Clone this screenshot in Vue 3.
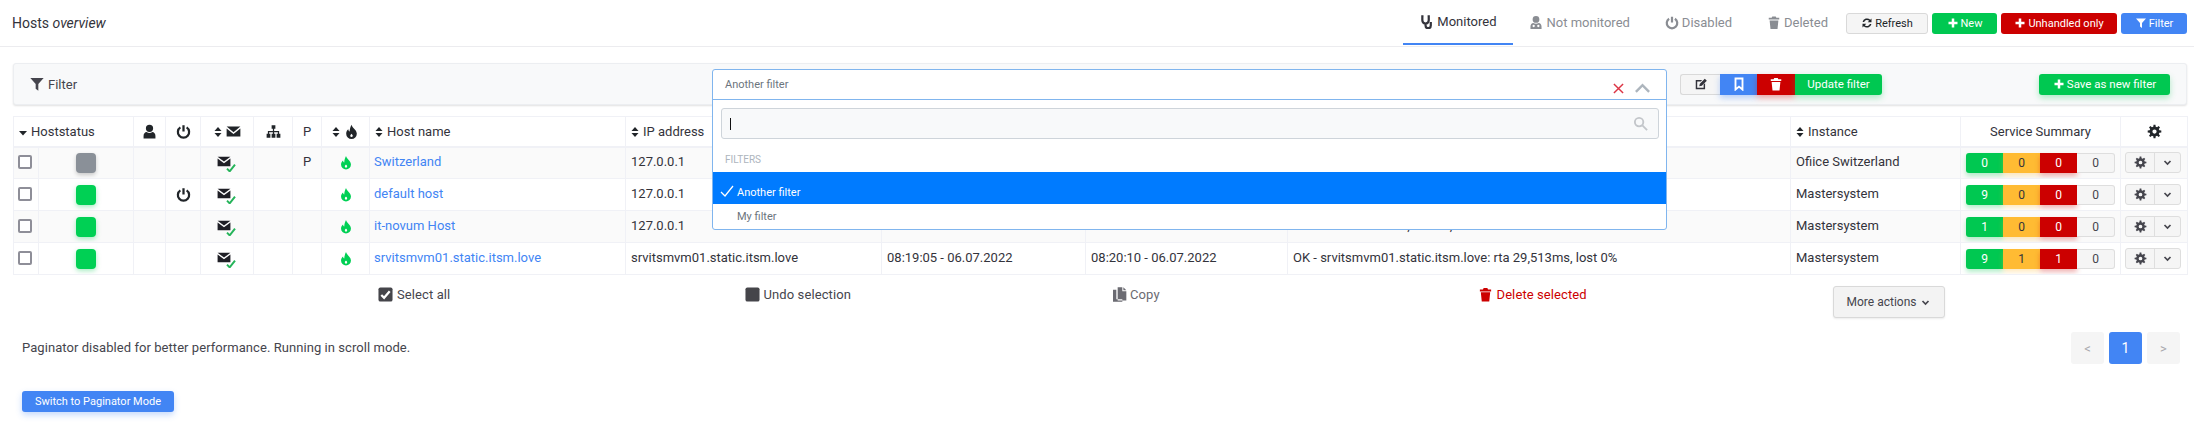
<template>
  <div class="page">
    <header class="top">
      <h1 class="title">Hosts <i>overview</i></h1>
      <nav class="tabs">
        <a class="tab active"><svg class="ic st" viewBox="0 0 24 24"><path :d="icons.steth" /></svg>Monitored</a>
        <a class="tab second"><svg class="ic" viewBox="0 0 24 24"><path :d="icons.userMd" /></svg>Not monitored</a>
        <a class="tab"><svg class="ic st" viewBox="0 0 24 24"><path :d="icons.power" /></svg>Disabled</a>
        <a class="tab"><svg class="ic" viewBox="0 0 24 24"><path :d="icons.trash" /></svg>Deleted</a>
      </nav>
      <div class="top-btns">
        <button class="btn light w-refresh"><svg class="ic" viewBox="0 0 24 24"><path :d="icons.refresh" /></svg>Refresh</button>
        <button class="btn green w-new"><svg class="ic" viewBox="0 0 24 24"><path :d="icons.plus" /></svg>New</button>
        <button class="btn red w-unh"><svg class="ic" viewBox="0 0 24 24"><path :d="icons.plus" /></svg>Unhandled only</button>
        <button class="btn blue w-filter"><svg class="ic" viewBox="0 0 24 24"><path :d="icons.filter" /></svg>Filter</button>
      </div>
    </header>

    <main class="content">
      <section class="filter-card">
        <div class="filter-label"><svg class="ic" viewBox="0 0 24 24"><path :d="icons.filter" /></svg>Filter</div>
        <div class="select-wrap">
          <div class="select">
            <div class="select-head">
              <span>Another filter</span>
              <svg class="x" viewBox="0 0 12 12"><path d="M1 1l10 10M11 1L1 11" /></svg>
              <svg class="chev-up" viewBox="0 0 18 10"><path d="M2 9l7-7 7 7" /></svg>
            </div>
            <div class="select-search">
              <div class="search-box">
                <span class="caret"></span>
                <svg class="search-ic" viewBox="0 0 16 16"><circle cx="6.5" cy="6.5" r="4.5" /><path d="M10 10l5 5" /></svg>
              </div>
            </div>
            <div class="group-label">FILTERS</div>
            <div class="option selected">
              <svg class="tick" viewBox="0 0 14 12"><path d="M1 7l4 4 8-10" /></svg>Another filter
            </div>
            <div class="option">My filter</div>
          </div>
        </div>
        <div class="filter-group">
          <button class="fbtn light f-edit"><svg class="ic" viewBox="0 0 24 24"><path :d="icons.edit" /></svg></button>
          <button class="fbtn blue f-mark"><svg class="ic st" viewBox="0 0 24 24"><path :d="icons.bookmark" /></svg></button>
          <button class="fbtn red f-del"><svg class="ic" viewBox="0 0 24 24"><path :d="icons.trash" /></svg></button>
          <button class="fbtn green f-upd">Update filter</button>
        </div>
        <button class="btn green save"><svg class="ic" viewBox="0 0 24 24"><path :d="icons.plus" /></svg>Save as new filter</button>
      </section>

      <table class="hosts">
        <colgroup>
          <col v-for="w in colWidths" :key="w.id" :style="{ width: w.px + 'px' }" />
        </colgroup>
        <thead>
          <tr>
            <th colspan="2"><svg class="sort" viewBox="0 0 24 24"><path :d="icons.sortDown" /></svg>Hoststatus</th>
            <th class="mid"><svg class="hi" viewBox="0 0 24 24"><path :d="icons.user" /></svg></th>
            <th class="mid"><svg class="hi st" viewBox="0 0 24 24"><path :d="icons.power" /></svg></th>
            <th class="mid"><svg class="sort" viewBox="0 0 24 24"><path :d="icons.sort" /></svg><svg class="hi" viewBox="0 0 24 24"><path :d="icons.mail" /></svg></th>
            <th class="mid"><svg class="hi" viewBox="0 0 24 24"><path :d="icons.sitemap" /></svg></th>
            <th class="mid">P</th>
            <th class="mid"><svg class="sort" viewBox="0 0 24 24"><path :d="icons.sort" /></svg><svg class="hi" viewBox="0 0 24 24"><path :d="icons.fire" /></svg></th>
            <th v-for="h in textHeads" :key="h"><svg class="sort" viewBox="0 0 24 24"><path :d="icons.sort" /></svg>{{ h }}</th>
            <th class="mid">Service Summary</th>
            <th class="mid"><svg class="hi" viewBox="0 0 24 24"><path :d="icons.gear" /></svg></th>
          </tr>
        </thead>
        <tbody>
          <tr v-for="row in rows" :key="row.name">
            <td class="check"><input type="checkbox" class="cb" /></td>
            <td class="mid"><span class="state" :class="row.state"></span></td>
            <td></td>
            <td class="mid"><svg v-if="row.disabled" class="hi st" viewBox="0 0 24 24"><path :d="icons.power" /></svg></td>
            <td class="mid">
              <span class="mail">
                <svg class="mail-ic" viewBox="0 0 24 18"><path :d="icons.mailRow" /></svg>
                <svg class="mail-ok" viewBox="0 0 14 12"><path d="M1 7l4 4 8-10" /></svg>
              </span>
            </td>
            <td></td>
            <td class="mid txt">{{ row.passive ? 'P' : '' }}</td>
            <td class="mid"><svg class="flame" viewBox="0 0 24 24"><path :d="icons.fire" /></svg></td>
            <td class="txt"><a class="link">{{ row.name }}</a></td>
            <td class="txt">{{ row.ip }}</td>
            <td class="txt">{{ row.lastChange }}</td>
            <td class="txt">{{ row.lastCheck }}</td>
            <td class="txt">{{ row.output }}</td>
            <td class="txt">{{ row.instance }}</td>
            <td class="summary-cell">
              <div class="summary">
                <span class="s ok">{{ row.summary[0] }}</span>
                <span class="s warn">{{ row.summary[1] }}</span>
                <span class="s crit">{{ row.summary[2] }}</span>
                <span class="s unk">{{ row.summary[3] }}</span>
              </div>
            </td>
            <td class="actions-cell">
              <div class="row-actions">
                <span class="ra-gear"><svg viewBox="0 0 24 24"><path :d="icons.gear" /></svg></span>
                <span class="ra-down"><svg class="st" viewBox="0 0 24 24"><path :d="icons.chevron" /></svg></span>
              </div>
            </td>
          </tr>
        </tbody>
      </table>

      <div class="bulk">
        <a class="bulk-item"><svg class="bi" viewBox="0 0 16 16"><rect x="0.5" y="0.5" width="15" height="15" rx="2" fill="#45454a" /><path d="M3.5 8.5l3 3 6-7" fill="none" stroke="#fff" stroke-width="2.4" /></svg>Select all</a>
        <a class="bulk-item"><svg class="bi" viewBox="0 0 16 16"><rect x="0.5" y="0.5" width="15" height="15" rx="2" fill="#45454a" /></svg>Undo selection</a>
        <a class="bulk-item copy"><svg class="bi" viewBox="0 0 24 24"><path :d="icons.copy" /></svg>Copy</a>
        <a class="bulk-item danger"><svg class="bi" viewBox="0 0 24 24"><path :d="icons.trash" /></svg>Delete selected</a>
        <button class="more">More actions<svg class="st" viewBox="0 0 24 24"><path :d="icons.chevron" /></svg></button>
      </div>

      <div class="foot">
        <p class="note">Paginator disabled for better performance. Running in scroll mode.</p>
        <div class="pager">
          <span class="pg">&lt;</span>
          <span class="pg on">1</span>
          <span class="pg">&gt;</span>
        </div>
      </div>
      <button class="switch">Switch to Paginator Mode</button>
    </main>
  </div>
</template>

<script setup>
// gear drawn from its teeth, the hole is cut with evenodd
const gearPath = () => {
  const pts = []
  const teeth = 8
  for (let i = 0; i < teeth; i++) {
    const a = (i / teeth) * Math.PI * 2
    const step = Math.PI / teeth
    ;[[-0.62, 8], [-0.36, 11], [0.36, 11], [0.62, 8]].forEach(([o, r]) => {
      const t = a + o * step
      pts.push(`${(12 + r * Math.cos(t)).toFixed(2)} ${(12 + r * Math.sin(t)).toFixed(2)}`)
    })
  }
  return `M${pts.join('L')}z M12 8.6a3.4 3.4 0 1 0 0 6.8a3.4 3.4 0 0 0 0-6.8z`
}

const icons = {
  filter: 'M2 3h20l-8 9v10l-4-3v-7z',
  plus: 'M9.5 3h5v6.5H21v5h-6.5V21h-5v-6.5H3v-5h6.5z',
  refresh: 'M21 3v7.5h-7.5l2.8-2.8A6 6 0 0 0 6.3 10H3.1A9.2 9.2 0 0 1 18.5 5.5z M3 21v-7.5h7.5l-2.8 2.8A6 6 0 0 0 17.7 14h3.2A9.2 9.2 0 0 1 5.5 18.5z',
  steth: 'M6 3H4v7a5.500 5.500 0 0 0 11 0V3h-2 M9.500 16v3a4.500 4.500 0 0 0 9 0v-6',
  user: 'M12 1a5.800 5.800 0 1 1 0 11.600A5.800 5.800 0 0 1 12 1z M2.500 23v-4c0-3.600 2.200-6 5-6.200 1.200.9 2.800 1.400 4.500 1.400s3.300-.5 4.500-1.400c2.800.2 5 2.600 5 6.200v4z',
  userMd: 'M12 1a5.800 5.800 0 1 1 0 11.600A5.800 5.800 0 0 1 12 1z M2.500 23v-4c0-3.600 2.200-6 5-6.200 1.200.9 2.800 1.400 4.500 1.400s3.300-.5 4.500-1.400c2.800.2 5 2.600 5 6.200v4z M8 16a2 2 0 1 0 0 4a2 2 0 0 0 0-4z M16 16a2 2 0 1 0 0 4a2 2 0 0 0 0-4z',
  power: 'M12 2v10 M7 5.500a9 9 0 1 0 10 0',
  trash: 'M9 1.500h6l1 2.500h5v3H3V4h5z M4.500 8.500h15L18 23H6z',
  mail: 'M1 4h22l-11 9z M1 7v13h22V7l-11 9z',
  mailRow: 'M1 1h22l-11 8z M1 4v13h22V4l-11 8z',
  sitemap: 'M9 2h6v5.500h-2V11h8v4.500h2V22h-6v-6.500h2V13h-6v2.500h2V22H9v-6.500h2V13H5v2.500h2V22H1v-6.500h2V11h8V7.500H9z',
  sort: 'M12 2l7 8H5z M12 22l-7-8h14z',
  sortDown: 'M12 19L4 10h16z',
  fire: 'M12 1c1 5 8.500 8 8.500 14.500a8.500 8.500 0 0 1-17 0c0-3 1.500-5.500 3.500-7 0 2 .8 3 2 3.500C9 8.500 10.500 4 12 1z M12 15.500c-.8 1-2 1.800-2 3.200a2 2 0 0 0 4 0c0-1.400-1.200-2.200-2-3.200z',
  gear: gearPath(),
  edit: 'M3 5h11l-2.500 2.500H5.500v11h11V13l2.500-2.500V21H3z M10 11.500L18.500 3 22 6.500 13.500 15 9 16z',
  bookmark: 'M6 2.500h12v19l-6-5-6 5z',
  copy: 'M10 1h7v6h6v14H10z M18.500 1L23 5.500h-4.500z M3 5h5v14h9v4H3z',
  chevron: 'M4 8l8 8 8-8'
}

const colWidths = [25, 95, 32, 35, 53, 39, 29, 48, 256, 256, 204, 202, 503, 170, 160, 67].map((px, id) => ({ id, px }))

const textHeads = ['Host name', 'IP address', 'Last state change', 'Last check', 'Host output', 'Instance']

const rows = [
  {
    name: 'Switzerland', state: 'grey', passive: true, ip: '127.0.0.1',
    lastChange: '08:19:05 - 06.07.2022', lastCheck: '08:20:10 - 06.07.2022',
    output: 'OK - 127.0.0.1: rta 0,043ms, lost 0%', instance: 'Ofiice Switzerland', summary: [0, 0, 0, 0]
  },
  {
    name: 'default host', state: 'up', disabled: true, ip: '127.0.0.1',
    lastChange: '08:19:05 - 06.07.2022', lastCheck: '08:20:10 - 06.07.2022',
    output: 'OK - 127.0.0.1: rta 0,043ms, lost 0%', instance: 'Mastersystem', summary: [9, 0, 0, 0]
  },
  {
    name: 'it-novum Host', state: 'up', ip: '127.0.0.1',
    lastChange: '08:19:05 - 06.07.2022', lastCheck: '08:20:10 - 06.07.2022',
    output: 'OK - 127.0.0.1: rta 0,043ms, lost 0%', instance: 'Mastersystem', summary: [1, 0, 0, 0]
  },
  {
    name: 'srvitsmvm01.static.itsm.love', state: 'up', ip: 'srvitsmvm01.static.itsm.love',
    lastChange: '08:19:05 - 06.07.2022', lastCheck: '08:20:10 - 06.07.2022',
    output: 'OK - srvitsmvm01.static.itsm.love: rta 29,513ms, lost 0%', instance: 'Mastersystem', summary: [9, 1, 1, 0]
  }
]
</script>

<style>
html, body { margin: 0; background: #fff; }
</style>

<style scoped>
.page {
  width: 2194px;
  height: 428px;
  overflow: hidden;
  font-family: Roboto, "Liberation Sans", sans-serif;
  font-size: 13px;
  color: #33333b;
}

svg { fill: currentColor; fill-rule: evenodd; }
svg.st { fill: none; stroke: currentColor; stroke-width: 3.2; }
button { font-family: inherit; cursor: pointer; }

.top {
  height: 46px;
  display: flex;
  align-items: center;
  padding: 0 7px 0 12px;
  border-bottom: 1px solid #ececef;
}
.title { margin: 0; font-size: 14px; font-weight: 400; flex: 1; }
.tabs { display: flex; height: 46px; }
.tab {
  display: flex;
  align-items: center;
  padding: 0 17px;
  margin-right: 1px;
  color: #8a8d93;
  box-sizing: border-box;
  height: 45px;
  white-space: nowrap;
}
.tab.second { padding-left: 16px; }
.tab .ic { width: 14px; height: 15px; margin-right: 3px; }
.tab .ic.st { stroke-width: 3.8; }
.tab.active { color: #33333b; border-bottom: 2px solid #4285f4; margin-right: 0; }
.top-btns { display: flex; gap: 4px; }

.btn {
  height: 21px;
  border: 0;
  border-radius: 3px;
  font-size: 11px;
  display: inline-flex;
  align-items: center;
  justify-content: center;
  padding: 0;
  white-space: nowrap;
}
.btn .ic { width: 12px; height: 12px; margin-right: 2px; }
.btn.light { background: #f5f5f5; border: 1px solid #d9d9d9; color: #212529; box-sizing: border-box; }
.green { background: #00c851; color: #fff; }
.red { background: #cc0000; color: #fff; }
.blue { background: #4285f4; color: #fff; }
.w-refresh { width: 82px; }
.w-new { width: 65px; }
.w-unh { width: 116px; }
.w-filter { width: 66px; }

.content { padding: 16px 7px 0 13px; }

.filter-card {
  height: 42px;
  box-sizing: border-box;
  background: #f8f9fa;
  border: 1px solid #eceef1;
  border-radius: 3px;
  box-shadow: 0 1px 2px rgba(0, 0, 0, .12);
  display: flex;
  align-items: center;
  margin-bottom: 11px;
}
.filter-label {
  width: 698px;
  box-sizing: border-box;
  padding-left: 15px;
  display: flex;
  align-items: center;
  color: #45454d;
}
.filter-label .ic { width: 16px; height: 16px; margin-right: 3px; }

.select-wrap { position: relative; width: 955px; height: 30px; z-index: 5; }
.select {
  position: absolute;
  top: 0;
  left: 0;
  right: 0;
  box-sizing: border-box;
  height: 161px;
  background: #fff;
  border: 1px solid #80b5ee;
  border-radius: 3px;
  font-size: 11px;
  color: #6c757d;
}
.select-head {
  height: 30px;
  box-sizing: border-box;
  border-bottom: 1px solid #80b5ee;
  padding-left: 12px;
  display: flex;
  align-items: center;
  position: relative;
}
.x {
  position: absolute;
  left: 900px;
  top: 13px;
  width: 11px;
  height: 11px;
  fill: none;
  stroke: #dc3545;
  stroke-width: 1.6;
}
.chev-up {
  position: absolute;
  left: 921px;
  top: 13px;
  width: 17px;
  height: 10px;
  fill: none;
  stroke: #adb5bd;
  stroke-width: 2.6;
}
.select-search { padding: 8px 7px 0 8px; }
.search-box {
  height: 31px;
  box-sizing: border-box;
  background: #f8f9fa;
  border: 1px solid #ced4da;
  border-radius: 3px;
  position: relative;
  display: flex;
  align-items: center;
  padding-left: 8px;
}
.caret { width: 1px; height: 12px; background: #111; }
.search-ic {
  position: absolute;
  right: 10px;
  top: 7px;
  width: 15px;
  height: 15px;
  fill: none;
  stroke: #c3c6ca;
  stroke-width: 2;
}
.group-label {
  height: 33px;
  box-sizing: border-box;
  padding: 14px 0 0 12px;
  font-size: 10px;
  line-height: 14px;
  color: #adb5bd;
}
.option {
  height: 25px;
  box-sizing: border-box;
  padding-left: 24px;
  line-height: 25px;
  position: relative;
}
.option.selected {
  height: 32px;
  line-height: 16px;
  padding-top: 13px;
  background: #007bff;
  color: #fff;
}
.tick {
  position: absolute;
  left: 7px;
  top: 13px;
  width: 14px;
  height: 12px;
  fill: none;
  stroke: #fff;
  stroke-width: 1.3;
}

.filter-group { display: flex; margin-left: 13px; height: 21px; }
.fbtn {
  height: 21px;
  border: 0;
  padding: 0;
  font-size: 11.5px;
  display: flex;
  align-items: center;
  justify-content: center;
}
.fbtn .ic { width: 14px; height: 14px; }
.f-edit {
  width: 40px;
  box-sizing: border-box;
  background: #f5f5f5;
  border: 1px solid #d9d9d9;
  border-right: 0;
  border-radius: 3px 0 0 3px;
  color: #33333b;
}
.f-mark { width: 37px; box-shadow: 0 3px 6px rgba(66, 133, 244, .35); }
.f-del { width: 38px; box-shadow: 0 3px 6px rgba(204, 0, 0, .35); }
.f-upd { width: 87px; border-radius: 0 3px 3px 0; box-shadow: 0 3px 6px rgba(0, 200, 81, .3); }
.save {
  width: 131px;
  margin-left: auto;
  margin-right: 16px;
  font-size: 11.5px;
  box-shadow: 0 3px 6px rgba(0, 200, 81, .3);
}

.hosts {
  width: 2174px;
  table-layout: fixed;
  border-collapse: collapse;
  background: #fff;
}
.hosts th, .hosts td {
  border: 1px solid #f0f1f6;
  padding: 0 0 0 5px;
  font-weight: 400;
  text-align: left;
  white-space: nowrap;
  overflow: hidden;
  vertical-align: middle;
  box-sizing: border-box;
}
.hosts th { height: 30px; border-bottom-width: 2px; }
.hosts td { height: 32px; }
.hosts th.mid, .hosts td.mid { text-align: center; padding: 0; }
.hosts td.txt { padding-bottom: 2px; }
.hosts tbody tr:nth-child(odd) { background: #fafafa; }

.sort { width: 12px; height: 12px; margin: 0 2px 0 -2px; vertical-align: -2px; color: #212529; }
.hi { width: 15px; height: 15px; vertical-align: -3px; color: #212529; }
.hi.st { stroke-width: 3.6; }

.hosts td.check { padding: 0 0 0 4px; }
.cb {
  appearance: none;
  display: block;
  width: 14px;
  height: 14px;
  margin: -2px 0 0;
  box-sizing: border-box;
  border: 2px solid #8e8e98;
  border-radius: 2px;
  background: #fff;
}
.state {
  display: block;
  width: 20px;
  height: 20px;
  margin: 1px auto 0;
  border-radius: 4px;
}
.state.grey { background: #8a9098; box-shadow: 0 2px 4px rgba(0, 0, 0, .2); }
.state.up { background: #00d054; box-shadow: 0 2px 5px rgba(0, 200, 81, .35); }
.mail { display: inline-block; position: relative; width: 20px; height: 20px; vertical-align: middle; }
.mail-ic { position: absolute; left: 0; top: 3px; width: 14px; height: 11px; color: #1f1f26; }
.mail-ok {
  position: absolute;
  left: 9px;
  top: 11px;
  width: 10px;
  height: 8px;
  fill: none;
  stroke: #26b45a;
  stroke-width: 3;
}
.flame { width: 14px; height: 15px; color: #00d054; vertical-align: -3px; }
.link { color: #4285f4; margin-left: -1px; }

.summary { display: flex; width: 149px; height: 20px; margin-top: 1px; }
.s {
  flex: 1;
  font-size: 12px;
  line-height: 20px;
  text-align: center;
}
.s.ok { background: #00c851; color: #fff; border-radius: 3px 0 0 3px; box-shadow: 0 3px 5px rgba(0, 200, 81, .3); }
.s.warn { background: #ffbb33; color: #33333b; box-shadow: 0 3px 5px rgba(255, 187, 51, .3); }
.s.crit { background: #cc0000; color: #fff; box-shadow: 0 3px 5px rgba(204, 0, 0, .3); }
.s.unk {
  background: #f5f5f5;
  color: #45454d;
  border: 1px solid #dedede;
  border-left: 0;
  border-radius: 0 3px 3px 0;
  line-height: 18px;
  box-sizing: border-box;
}

.hosts td.actions-cell { padding-left: 4px; }
.row-actions {
  display: flex;
  width: 56px;
  height: 21px;
  box-sizing: border-box;
  border: 1px solid #dedede;
  border-radius: 3px;
  background: #f5f5f5;
  color: #45454d;
}
.ra-gear { width: 28px; display: flex; align-items: center; justify-content: center; border-right: 1px solid #dedede; }
.ra-gear svg { width: 13px; height: 13px; }
.ra-down { flex: 1; display: flex; align-items: center; justify-content: center; }
.ra-down svg { width: 9px; height: 9px; stroke-width: 4.5; }

.bulk {
  display: grid;
  grid-template-columns: 366.5px 366.5px 366.5px 355px auto;
  align-items: start;
  padding: 11px 0 0 365px;
  height: 32px;
}
.bulk-item { display: flex; align-items: center; height: 18px; margin-top: -1px; color: #45454d; white-space: nowrap; letter-spacing: .1px; }
.bi { width: 15px; height: 15px; margin-right: 4px; }
.copy { color: #6b6b72; }
.copy .bi { width: 16px; height: 17px; margin-right: 3px; }
.danger { color: #cc0000; }
.more {
  width: 112px;
  height: 32px;
  box-sizing: border-box;
  background: #f3f3f3;
  border: 1px solid #d9d9d9;
  border-radius: 3px;
  font-size: 12px;
  color: #45454d;
  box-shadow: 0 1px 2px rgba(0, 0, 0, .08);
  display: flex;
  align-items: center;
  justify-content: center;
}
.more svg { width: 9px; height: 9px; margin-left: 5px; stroke-width: 4.5; }

.foot {
  display: flex;
  justify-content: space-between;
  align-items: center;
  height: 32px;
  margin-top: 14px;
  padding: 0 7px 0 9px;
}
.note { margin: 0; padding-bottom: 2px; color: #45454d; letter-spacing: .06px; }
.pager { display: flex; gap: 5px; }
.pg {
  width: 33px;
  height: 32px;
  border-radius: 3px;
  background: #f5f5f5;
  color: #a8a8ad;
  display: flex;
  align-items: center;
  justify-content: center;
}
.pg.on { background: #4285f4; color: #fff; font-size: 14px; }
.switch {
  display: block;
  margin: 27px 0 0 9px;
  width: 152px;
  height: 21px;
  padding: 0;
  background: #4285f4;
  color: #fff;
  border: 0;
  border-radius: 3px;
  font-size: 11px;
  box-shadow: 0 3px 6px rgba(66, 133, 244, .3);
}
</style>
